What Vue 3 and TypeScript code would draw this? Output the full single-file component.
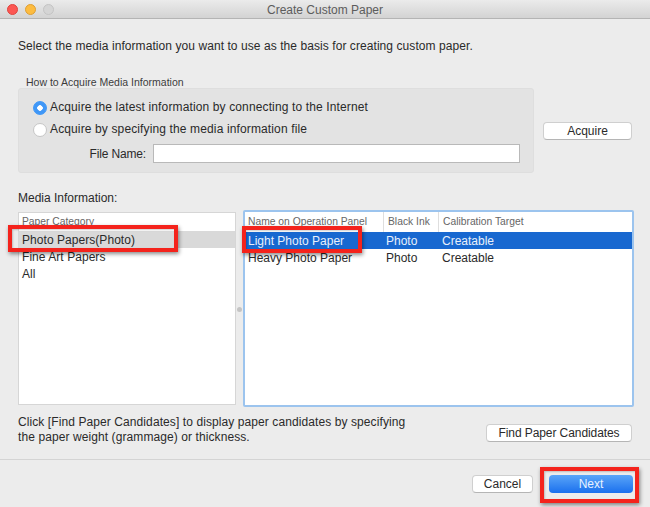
<script setup lang="ts">
const categories = ['Photo Papers(Photo)', 'Fine Art Papers', 'All']
const papers = [
  { name: 'Light Photo Paper', ink: 'Photo', target: 'Creatable' },
  { name: 'Heavy Photo Paper', ink: 'Photo', target: 'Creatable' },
]
</script>

<template>
  <div class="win">
    <header class="titlebar">
      <span class="light red"></span>
      <span class="light yellow"></span>
      <span class="light gray"></span>
      <span class="title">Create Custom Paper</span>
    </header>

    <main class="body">
      <p class="intro">Select the media information you want to use as the basis for creating custom paper.</p>

      <div class="acquire-row">
        <section class="group-wrap">
          <div class="group-label">How to Acquire Media Information</div>
          <div class="group">
            <label class="radio-row">
              <span class="radio on"></span>Acquire the latest information by connecting to the Internet
            </label>
            <label class="radio-row second">
              <span class="radio"></span>Acquire by specifying the media information file
            </label>
            <div class="file-row">
              <span class="file-label">File Name:</span>
              <span class="input"></span>
            </div>
          </div>
        </section>
        <button class="btn acquire">Acquire</button>
      </div>

      <div class="media-label">Media Information:</div>

      <div class="lists">
        <div class="list left">
          <div class="col-head cat-head">Paper Category</div>
          <div v-for="(c, i) in categories" :key="c" class="cat" :class="{ picked: i === 0 }">{{ c }}</div>
        </div>
        <div class="split"><span class="dot"></span></div>
        <div class="list right">
          <div class="head-row">
            <span class="c1">Name on Operation Panel</span>
            <span class="c2">Black Ink</span>
            <span class="c3">Calibration Target</span>
          </div>
          <div v-for="(p, i) in papers" :key="p.name" class="row" :class="{ sel: i === 0 }">
            <span class="c1">{{ p.name }}</span>
            <span class="c2">{{ p.ink }}</span>
            <span class="c3">{{ p.target }}</span>
          </div>
        </div>
      </div>

      <div class="find-row">
        <p class="hint">Click [Find Paper Candidates] to display paper candidates by specifying<br />the paper weight (grammage) or thickness.</p>
        <button class="btn find">Find Paper Candidates</button>
      </div>
    </main>

    <footer class="footer">
      <button class="btn cancel">Cancel</button>
      <button class="btn next">Next</button>
    </footer>

    <span class="mark m1"></span>
    <span class="mark m2"></span>
    <span class="mark m3"></span>
  </div>
</template>

<style>
html, body { margin: 0; padding: 0; background: #ececec; }
</style>

<style scoped>
.win {
  position: relative;
  width: 650px;
  height: 507px;
  overflow: hidden;
  background: #ececec;
  color: #2a2a2a;
  font-family: "Liberation Sans", Arial, sans-serif;
  font-size: 12px;
  display: flex;
  flex-direction: column;
}
.titlebar {
  height: 18px;
  padding-left: 7px;
  display: flex;
  align-items: center;
  gap: 7px;
  position: relative;
  background: linear-gradient(#ebebeb, #d3d3d3);
  border-bottom: 1px solid #b4b4b4;
  flex: none;
}
.light { width: 11px; height: 11px; border-radius: 50%; box-sizing: border-box; }
.red { background: #fc5753; border: 1px solid #e0443e; }
.yellow { background: #fdbc40; border: 1px solid #de9f34; }
.gray { background: #d5d5d5; border: 1px solid #c4c4c4; }
.title {
  position: absolute;
  left: 0; right: 0; top: 3px;
  text-align: center;
  color: #5c5c5c;
  font-size: 12px;
  line-height: 14px;
}
.body { flex: none; height: 440px; padding: 0 18px; position: relative; box-sizing: border-box; }
.intro { margin: 19px 0 0; line-height: 16px; height: 16px; letter-spacing: 0.07px; white-space: nowrap; }
.acquire-row { display: flex; align-items: flex-start; margin-top: 22px; }
.group-wrap { width: 516px; flex: none; }
.group-label { font-size: 10.5px; line-height: 12px; padding-left: 8px; color: #3c3c3c; }
.group {
  height: 85px;
  box-sizing: border-box;
  padding-top: 11px;
  background: #e3e3e3;
  border: 1px solid #dedede;
  border-radius: 3px;
}
.radio-row { display: flex; align-items: center; height: 15px; padding-left: 14px; line-height: 15px; letter-spacing: 0.13px; }
.radio-row.second { margin-top: 7px; }
.radio {
  width: 14px; height: 14px;
  border-radius: 50%;
  background: #fff;
  border: 1px solid #c6c6c6;
  box-sizing: border-box;
  margin-right: 3px;
  flex: none;
}
.radio.on { background: radial-gradient(circle, #fff 0 2.5px, #3f97f7 3px); border-color: #3f97f7; }
.file-row { display: flex; align-items: center; margin-top: 7px; height: 19px; }
.file-label { width: 127px; text-align: right; padding-right: 7px; letter-spacing: -0.15px; }
.input {
  width: 367px; height: 19px;
  box-sizing: border-box;
  background: #fff;
  border: 1px solid #b9b9b9;
}
.btn {
  font: inherit;
  height: 18px;
  padding: 0;
  color: #2a2a2a;
  background: #fff;
  border: 1px solid #cfcfcf;
  border-bottom-color: #b5b5b5;
  border-radius: 4px;
  box-sizing: border-box;
  line-height: 16px;
}
.acquire { width: 89px; margin: 46px 0 0 9px; flex: none; }
.media-label { margin-top: 17px; line-height: 16px; height: 16px; }
.lists { display: flex; height: 197px; margin-top: 4px; }
.list { background: #fff; box-sizing: border-box; flex: none; }
.left { width: 218px; height: 193px; margin-top: 2px; border: 1px solid #d6d6d6; }
.split { width: 7px; flex: none; display: flex; justify-content: center; align-items: center; }
.dot { width: 5px; height: 5px; border-radius: 50%; background: #c4c4c4; margin-top: 2px; }
.right { width: 391px; border: 2px solid #9cc4ee; border-radius: 2px; }
.col-head, .head-row { font-size: 10.3px; color: #666; }
.cat-head { height: 18px; line-height: 17px; padding-left: 3px; }
.cat { height: 17px; line-height: 19px; padding-left: 3px; letter-spacing: 0.05px; }
.cat.picked { background: #d9d9d9; }
.head-row, .row { display: flex; align-items: center; }
.head-row { height: 20px; }
.head-row span { line-height: 20px; height: 20px; }
.head-row .c2, .head-row .c3 { border-left: 1px solid #dedede; box-sizing: border-box; }
.head-row .c2 { padding-left: 4px; }
.head-row .c3 { padding-left: 4px; }
.c1 { width: 138px; padding-left: 3px; box-sizing: border-box; white-space: nowrap; }
.c2 { width: 55px; white-space: nowrap; }
.c3 { flex: 1; white-space: nowrap; }
.row { height: 17px; padding-top: 1px; box-sizing: border-box; line-height: 16px; }
.row .c2 { padding-left: 3px; box-sizing: border-box; }
.row .c3 { padding-left: 4px; box-sizing: border-box; }
.row.sel { background: #1868d0; color: #e8f0fb; }
.find-row { display: flex; justify-content: space-between; align-items: flex-start; margin-top: 8px; }
.hint { margin: 0; line-height: 15px; font-size: 12px; letter-spacing: 0.09px; }
.find { width: 146px; height: 18px; margin-top: 9px; flex: none; letter-spacing: -0.08px; }
.footer {
  flex: none;
  height: 48px;
  border-top: 1px solid #d4d4d4;
  display: flex;
  justify-content: flex-end;
  align-items: flex-start;
  gap: 16px;
  padding: 15px 17px 0 0;
  box-sizing: border-box;
}
.cancel { width: 61px; }
.next {
  width: 84px;
  color: #e8f2ff;
  border: none;
  background: linear-gradient(#5aa5f8, #1a70ee);
}
.mark {
  position: absolute;
  box-sizing: border-box;
  border: 4px solid #f4231c;
  box-shadow: 1px 2px 4px rgba(0, 0, 0, 0.45), inset 1px 1px 2px rgba(0, 0, 0, 0.2);
}
.m1 { left: 8px; top: 225px; width: 170px; height: 27px; }
.m2 { left: 242px; top: 226px; width: 120px; height: 27px; }
.m3 { left: 540px; top: 467px; width: 99px; height: 36px; }
</style>
